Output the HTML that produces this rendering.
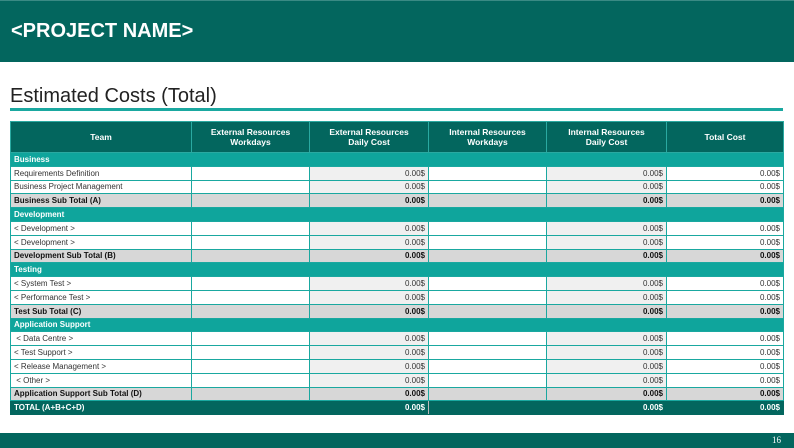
<!DOCTYPE html>
<html><head><style>
*{margin:0;padding:0;box-sizing:border-box}
body{width:794px;height:448px;position:relative;background:#fff;font-family:"Liberation Sans",Arial,sans-serif;overflow:hidden}
.top{position:absolute;left:0;top:0;width:794px;height:62px;background:#03665e;border-top:1px solid #3a8a84}
.top span{position:absolute;left:11px;top:19px;color:#fff;font-weight:bold;font-size:20px}
.title{position:absolute;left:10px;top:85px;font-size:20px;color:#222}
.line{position:absolute;left:10px;top:108px;width:773px;height:3px;background:#1aa8a0}
table{position:absolute;left:10px;top:121px;width:773px;border-collapse:collapse;table-layout:fixed;font-size:8px}
td,th{border:1px solid #1aa8a0;height:13.8px;padding:0 3px;white-space:nowrap;overflow:hidden;color:#333}
th{background:#03665e;color:#fff;height:31px;font-size:8.5px;text-align:center;border-color:#2aa9a1}
tr.sec td{background:#0fa59c;color:#fff;font-weight:bold}
tr.sub td{background:#d7d7d7;font-weight:bold;color:#111}
tr.tot td{background:#03665e;color:#fff;font-weight:bold;border-color:#03665e}
td.n{text-align:right}
td.g{background:#f0f0f0}
.bot{position:absolute;left:0;top:433px;width:794px;height:15px;background:#03665e}
.bot span{position:absolute;right:13px;top:2px;color:#fff;font-family:"Liberation Serif",serif;font-size:9px}
</style></head><body>
<div class="top"><span>&lt;PROJECT NAME&gt;</span></div>
<div class="title">Estimated Costs (Total)</div>
<div class="line"></div>
<table>
<colgroup><col style="width:181px"><col style="width:118px"><col style="width:119px"><col style="width:118px"><col style="width:120px"><col style="width:117px"></colgroup>
<tr><th>Team</th><th>External Resources<br>Workdays</th><th>External Resources<br>Daily Cost</th><th>Internal Resources<br>Workdays</th><th>Internal Resources<br>Daily Cost</th><th>Total Cost</th></tr>
<tr class="sec"><td colspan="6">Business</td></tr>
<tr><td>Requirements Definition</td><td></td><td class="n g">0.00$</td><td></td><td class="n g">0.00$</td><td class="n">0.00$</td></tr>
<tr><td>Business Project Management</td><td></td><td class="n g">0.00$</td><td></td><td class="n g">0.00$</td><td class="n">0.00$</td></tr>
<tr class="sub"><td>Business Sub Total (A)</td><td></td><td class="n">0.00$</td><td></td><td class="n">0.00$</td><td class="n">0.00$</td></tr>
<tr class="sec"><td colspan="6">Development</td></tr>
<tr><td>&lt; Development &gt;</td><td></td><td class="n g">0.00$</td><td></td><td class="n g">0.00$</td><td class="n">0.00$</td></tr>
<tr><td>&lt; Development &gt;</td><td></td><td class="n g">0.00$</td><td></td><td class="n g">0.00$</td><td class="n">0.00$</td></tr>
<tr class="sub"><td>Development Sub Total (B)</td><td></td><td class="n">0.00$</td><td></td><td class="n">0.00$</td><td class="n">0.00$</td></tr>
<tr class="sec"><td colspan="6">Testing</td></tr>
<tr><td>&lt; System Test &gt;</td><td></td><td class="n g">0.00$</td><td></td><td class="n g">0.00$</td><td class="n">0.00$</td></tr>
<tr><td>&lt; Performance Test &gt;</td><td></td><td class="n g">0.00$</td><td></td><td class="n g">0.00$</td><td class="n">0.00$</td></tr>
<tr class="sub"><td>Test Sub Total (C)</td><td></td><td class="n">0.00$</td><td></td><td class="n">0.00$</td><td class="n">0.00$</td></tr>
<tr class="sec"><td colspan="6">Application Support</td></tr>
<tr><td>&nbsp;&lt; Data Centre &gt;</td><td></td><td class="n g">0.00$</td><td></td><td class="n g">0.00$</td><td class="n">0.00$</td></tr>
<tr><td>&lt; Test Support &gt;</td><td></td><td class="n g">0.00$</td><td></td><td class="n g">0.00$</td><td class="n">0.00$</td></tr>
<tr><td>&lt; Release Management &gt;</td><td></td><td class="n g">0.00$</td><td></td><td class="n g">0.00$</td><td class="n">0.00$</td></tr>
<tr><td>&nbsp;&lt; Other &gt;</td><td></td><td class="n g">0.00$</td><td></td><td class="n g">0.00$</td><td class="n">0.00$</td></tr>
<tr class="sub"><td>Application Support Sub Total (D)</td><td></td><td class="n">0.00$</td><td></td><td class="n">0.00$</td><td class="n">0.00$</td></tr>
<tr class="tot"><td>TOTAL (A+B+C+D)</td><td></td><td class="n" style="border-right:1px solid #bbb">0.00$</td><td></td><td class="n">0.00$</td><td class="n">0.00$</td></tr>
</table>
<div class="bot"><span>16</span></div>
</body></html>
